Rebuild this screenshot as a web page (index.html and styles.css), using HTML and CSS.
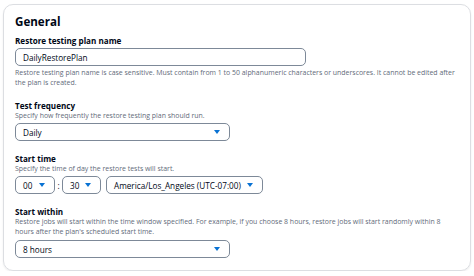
FILE: index.html
```html
<!DOCTYPE html>
<html>
<head>
<meta charset="utf-8">
<link rel="stylesheet" href="styles.css">
</head>
<body>
<div class="card">
  <h2 class="title">General</h2>

  <div class="field first">
    <div class="label">Restore testing plan name</div>
    <div class="control input">DailyRestorePlan</div>
    <div class="hint">Restore testing plan name is case sensitive. Must contain from 1 to 50 alphanumeric characters or underscores. It cannot be edited after the plan is created.</div>
  </div>

  <div class="field">
    <div class="label">Test frequency</div>
    <div class="desc">Specify how frequently the restore testing plan should run.</div>
    <div class="control select wide"><span>Daily</span><svg class="caret" viewBox="0 0 6 4"><path d="M0 0H6L3 4Z"/></svg></div>
  </div>

  <div class="field">
    <div class="label">Start time</div>
    <div class="desc">Specify the time of day the restore tests will start.</div>
    <div class="time-row">
      <div class="control select hh"><span>00</span><svg class="caret" viewBox="0 0 6 4"><path d="M0 0H6L3 4Z"/></svg></div>
      <span class="colon">:</span>
      <div class="control select mm"><span>30</span><svg class="caret" viewBox="0 0 6 4"><path d="M0 0H6L3 4Z"/></svg></div>
      <div class="control select tz"><span>America/Los_Angeles (UTC-07:00)</span><svg class="caret" viewBox="0 0 6 4"><path d="M0 0H6L3 4Z"/></svg></div>
    </div>
  </div>

  <div class="field">
    <div class="label">Start within</div>
    <div class="desc">Restore jobs will start within the time window specified. For example, if you choose 8 hours, restore jobs will start randomly within 8 hours after the plan's scheduled start time.</div>
    <div class="control select wide"><span>8 hours</span><svg class="caret" viewBox="0 0 6 4"><path d="M0 0H6L3 4Z"/></svg></div>
  </div>
</div>
</body>
</html>
```

FILE: styles.css
```css
* { box-sizing: border-box; }
html, body { margin: 0; padding: 0; background: #ffffff; }
body {
  font-family: "Open Sans", "Noto Sans", sans-serif;
  color: #000716;
}
.card {
  margin: 4px 0 0 3px;
  width: 468px;
  height: 267px;
  border: 1px solid #dcdee2;
  border-radius: 10px;
  padding: 9px 11px 10px 11px;
  box-shadow: 0 1px 2px rgba(0, 7, 22, 0.08);
}
.title {
  margin: 0;
  font-size: 11.6px;
  line-height: 16px;
  font-weight: 700;
}
.field { margin-top: 12px; display: flex; flex-direction: column; }
.field.first { margin-top: 5px; }
.label {
  font-size: 8.1px;
  line-height: 11px;
  font-weight: 700;
}
.desc, .hint {
  font-size: 6.95px;
  line-height: 10px;
  color: #5f6b7a;
}
.hint { margin-top: 2px; }
.control {
  height: 18px;
  border: 1px solid #7d8998;
  border-radius: 5px;
  font-size: 8.2px;
  font-weight: 500;
  display: flex;
  align-items: center;
  padding: 0 9px 0 7px;
  color: #000716;
}
.input { margin-top: 2px; width: 291px; }
.select { justify-content: space-between; }
.desc + .control, .desc + .time-row { margin-top: 2px; }
.field:last-child .desc + .control { margin-top: 3px; }
.time-row { display: flex; align-items: center; margin-top: 3px; }
.wide { width: 215px; }
.hh { width: 40px; }
.mm { width: 39px; }
.tz { width: 157px; margin-left: 5px; }
.colon {
  width: 7px;
  text-align: center;
  font-size: 8.2px;
  color: #000716;
}
.caret { width: 6px; height: 4px; fill: #0972d3; flex: none; }
```
